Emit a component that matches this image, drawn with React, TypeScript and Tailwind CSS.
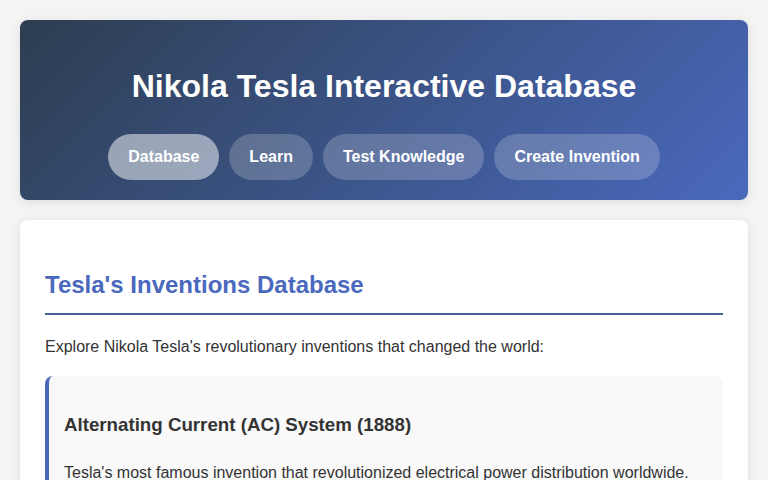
const tabs = ['Database', 'Learn', 'Test Knowledge', 'Create Invention']

export default function App() {
  const active = 'Database'

  return (
    <div className="min-h-screen bg-[#f4f4f4] p-5 font-['Liberation_Sans',Arial,sans-serif] text-[#333]">
      {/* Header */}
      <header className="rounded-lg bg-[linear-gradient(135deg,#2c3e50,#4a69bd)] px-5 pt-[48px] pb-5 text-center text-white shadow-[0_2px_10px_rgba(0,0,0,0.1)]">
        <h1 className="mb-[29px] text-[32px] leading-[37px] font-bold">Nikola Tesla Interactive Database</h1>
        <nav className="flex justify-center gap-[10px]">
          {tabs.map(t => (
            <button
              key={t}
              className={`h-[46px] rounded-full px-5 text-base font-bold text-white ${t === active ? 'bg-white/50' : 'bg-white/20'}`}
            >
              {t}
            </button>
          ))}
        </nav>
      </header>

      {/* Content */}
      <main className="mt-5 rounded-lg bg-white px-[25px] pt-[51px] pb-6 shadow-[0_2px_10px_rgba(0,0,0,0.1)]">
        <h2 className="border-b-2 border-[#4c619b] pb-[14px] text-[24px] leading-[28px] font-bold text-[#4a69bd]">
          Tesla's Inventions Database
        </h2>
        <p className="mt-[23px] mb-5 text-base leading-[18px]">
          Explore Nikola Tesla's revolutionary inventions that changed the world:
        </p>

        <div className="rounded-lg border-l-4 border-[#4a69bd] bg-[#f9f9f9] px-[15px] pt-[38px] pb-5">
          <h3 className="text-[18.72px] leading-[22px] font-bold">Alternating Current (AC) System (1888)</h3>
          <p className="mt-[28px] text-base leading-[18px]">
            Tesla's most famous invention that revolutionized electrical power distribution worldwide.
          </p>
        </div>
      </main>
    </div>
  )
}
